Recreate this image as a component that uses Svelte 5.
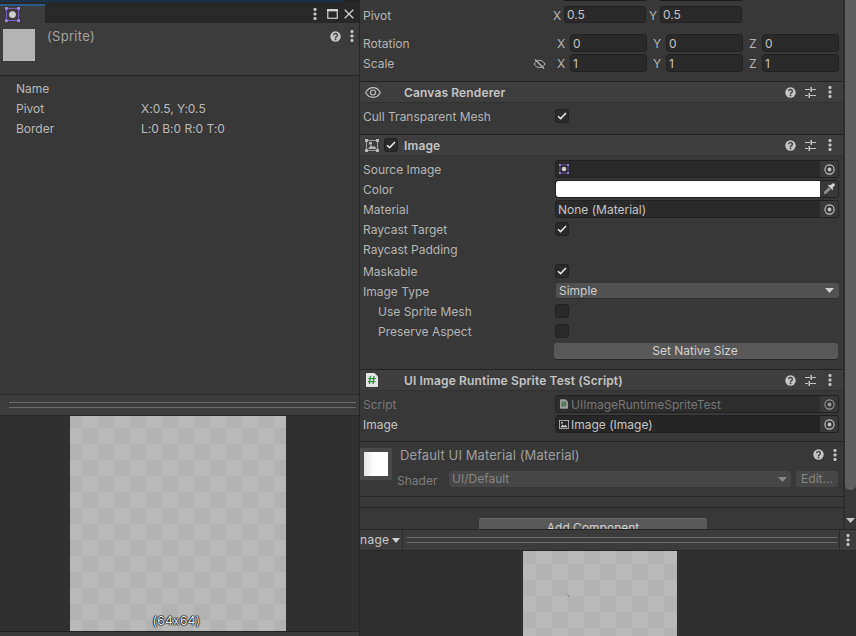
<script>
  const imageRowsA = ['Raycast Target'];
</script>

{#snippet dots()}
  <svg class="ic" width="4" height="14" viewBox="0 0 4 14"><rect x="0.5" y="1" width="3" height="3" rx="1" fill="#c4c4c4"/><rect x="0.5" y="5.500" width="3" height="3" rx="1" fill="#c4c4c4"/><rect x="0.5" y="10" width="3" height="3" rx="1" fill="#c4c4c4"/></svg>
{/snippet}
{#snippet help()}
  <svg class="ic" width="11" height="11" viewBox="0 0 11 11"><circle cx="5.500" cy="5.500" r="5.200" fill="#c4c4c4"/><path d="M3.700 4.200a1.800 1.700 0 1 1 2.800 1.400c-.7.400-1 .7-1 1.300" fill="none" stroke="#3a3a3a" stroke-width="1.400"/><rect x="4.700" y="7.600" width="1.600" height="1.600" fill="#3a3a3a"/></svg>
{/snippet}
{#snippet sliders()}
  <svg class="ic" width="11" height="11" viewBox="0 0 11 11" fill="#c4c4c4"><rect x="0" y="2" width="5" height="1"/><rect x="7" y="2" width="4" height="1"/><rect x="5.500" y="0" width="1.500" height="5"/><rect x="0" y="8" width="3" height="1"/><rect x="5" y="8" width="6" height="1"/><rect x="3.500" y="6" width="1.500" height="5"/></svg>
{/snippet}
{#snippet tools()}
  <span class="tools">{@render help()}{@render sliders()}{@render dots()}</span>
{/snippet}
{#snippet check()}
  <span class="cb"><svg width="10" height="8" viewBox="0 0 10 8"><path d="M1 4.200 3.600 6.600 9 1" fill="none" stroke="#e8e8e8" stroke-width="1.500"/></svg></span>
{/snippet}
{#snippet picker(op)}
  <span class="picker"><svg width="11" height="11" viewBox="0 0 11 11" opacity={op}><circle cx="5.500" cy="5.500" r="4.600" fill="none" stroke="#c4c4c4" stroke-width="1.100"/><circle cx="5.500" cy="5.500" r="1.900" fill="#c4c4c4"/></svg></span>
{/snippet}
{#snippet spriteIcon(s)}
  <svg width={s} height={s} viewBox="0 0 16 16"><rect x="1.500" y="1.500" width="13" height="13" fill="none" stroke="#7d5fc4" stroke-width="1"/><rect x="0" y="0" width="3" height="3" rx=".6" fill="#a585e6"/><rect x="13" y="0" width="3" height="3" rx=".6" fill="#a585e6"/><rect x="0" y="13" width="3" height="3" rx=".6" fill="#a585e6"/><rect x="13" y="13" width="3" height="3" rx=".6" fill="#a585e6"/><circle cx="8" cy="8" r="3.600" fill="#d0d0d0"/></svg>
{/snippet}
{#snippet imgIcon(w, h, c)}
  <svg width={w} height={h} viewBox="0 0 14 12"><rect x=".5" y=".5" width="13" height="11" fill="none" stroke={c} stroke-width="1"/><path d="M2 10 5 6l2 2 2-1.500 3 3.500z" fill={c}/><rect x="3" y="2.500" width="2.500" height="2" fill={c}/></svg>
{/snippet}
{#snippet uiImageIcon()}
  <svg width="14" height="13" viewBox="0 0 14 13" fill="#b4b4b4"><rect x="1.500" y="1.500" width="11" height="10" fill="none" stroke="#9a9a9a" stroke-width="1"/><rect x="0" y="0" width="3" height="3"/><rect x="11" y="0" width="3" height="3"/><rect x="0" y="10" width="3" height="3"/><rect x="11" y="10" width="3" height="3"/><path d="M3 10 6 6l2 2 1.500-1 2 3z"/><rect x="4" y="3" width="3" height="2.500"/></svg>
{/snippet}
{#snippet scriptIcon(w, h, op)}
  <svg width={w} height={h} viewBox="0 0 12 14" opacity={op}><path d="M0 1a1 1 0 0 1 1-1h7.500L12 3.500V13a1 1 0 0 1-1 1H1a1 1 0 0 1-1-1z" fill="#e4e4e4"/><path d="M4.400 3 3.500 11M8 3l-.9 8M2.300 5.600h7.400M2 8.600h7.400" stroke="#2b8a3e" stroke-width="1.200" fill="none"/></svg>
{/snippet}

<div class="app">
  <section class="left">
    <div class="navy"></div>
    <div class="tabs">
      <div class="tab">{@render spriteIcon(15)}</div>
      <div class="tabtools">
        {@render dots()}
        <svg class="ic mx" width="11" height="10" viewBox="0 0 11 10"><rect x=".75" y="1.250" width="9.500" height="8" fill="none" stroke="#d0d0d0" stroke-width="1.200"/><rect x="0" y="0" width="11" height="2.400" fill="#d0d0d0"/></svg>
        <svg class="ic" width="10" height="10" viewBox="0 0 10 10"><path d="M.7.7l8.600 8.600M9.300.7.7 9.300" stroke="#d0d0d0" stroke-width="1.300"/></svg>
      </div>
    </div>
    <header class="lhead">
      <div class="thumb"></div>
      <div class="spname">(Sprite)</div>
      <div class="lheadtools">{@render help()}{@render dots()}</div>
    </header>
    <div class="lbody">
      <div class="lrow"><span class="lk">Name</span></div>
      <div class="lrow"><span class="lk">Pivot</span><span>X:0.5, Y:0.5</span></div>
      <div class="lrow"><span class="lk">Border</span><span>L:0 B:0 R:0 T:0</span></div>
    </div>
    <div class="bar"><div class="grip"></div></div>
    <div class="preview lp">
      <div class="checker big"><span class="dim">(64x64)</span></div>
    </div>
    <div class="lfoot"></div>
  </section>

  <section class="right">
    <div class="rmain">
      <div class="inspector">
        <div class="stub"><i></i><i></i></div>
        <div class="row pivot">
          <span class="k k190">Pivot</span>
          <div class="axis"><span>X</span><div class="f">0.5</div></div>
          <div class="axis"><span>Y</span><div class="f">0.5</div></div>
        </div>
        <div class="row rot">
          <span class="k">Rotation</span>
          <div class="axis"><span>X</span><div class="f">0</div></div>
          <div class="axis"><span>Y</span><div class="f">0</div></div>
          <div class="axis"><span>Z</span><div class="f">0</div></div>
        </div>
        <div class="row">
          <span class="k scale">Scale
            <svg width="13" height="10" viewBox="0 0 13 10"><path d="M1 5c1.500-2.500 3.500-3.500 5.500-3.500S10.500 2.500 12 5c-1.500 2.500-3.500 3.500-5.500 3.500S2.500 7.500 1 5z" fill="none" stroke="#b8b8b8"/><path d="M2 0.500 11 9.500" stroke="#b8b8b8" stroke-width="1.200"/></svg>
          </span>
          <div class="axis"><span>X</span><div class="f">1</div></div>
          <div class="axis"><span>Y</span><div class="f">1</div></div>
          <div class="axis"><span>Z</span><div class="f">1</div></div>
        </div>

        <div class="chead first">
          <span class="cico"><svg width="16" height="11" viewBox="0 0 16 11"><path d="M.7 5.500C2.500 2 5 .6 8 .6s5.500 1.400 7.300 4.900C13.500 9 11 10.400 8 10.400S2.500 9 .7 5.500z" fill="none" stroke="#c4c4c4" stroke-width="1.100"/><circle cx="8" cy="5.500" r="2.500" fill="none" stroke="#c4c4c4" stroke-width="1.100"/></svg></span>
          <span class="ctitle">Canvas Renderer</span>
          {@render tools()}
        </div>
        <div class="row cull"><span class="k">Cull Transparent Mesh</span>{@render check()}</div>

        <div class="chead second">
          <span class="cico">{@render uiImageIcon()}</span>
          <span class="cen">{@render check()}</span>
          <span class="ctitle">Image</span>
          {@render tools()}
        </div>
        <div class="row src"><span class="k">Source Image</span><div class="obj"><span class="objt"><span class="oi">{@render spriteIcon(10)}</span></span>{@render picker(1)}</div></div>
        <div class="row"><span class="k">Color</span><div class="color"><div class="white"></div><span class="drop"><svg width="12" height="12" viewBox="0 0 12 12"><path d="M.8 11.200l.6-2.600L5.800 4.200l2 2-4.400 4.400z" fill="#8f8f8f"/><path d="M5 2.600l1-1 1 1L9 .7a1.300 1.300 0 0 1 2.300 2.300L9.400 5l1 1-1 1z" fill="#d4d4d4"/></svg></span></div></div>
        <div class="row"><span class="k">Material</span><div class="obj"><span class="objt plain">None (Material)</span>{@render picker(1)}</div></div>
        {#each imageRowsA as r}
          <div class="row"><span class="k">{r}</span>{@render check()}</div>
        {/each}
        <div class="row"><span class="k">Raycast Padding</span></div>
        <div class="row mask"><span class="k">Maskable</span>{@render check()}</div>
        <div class="row"><span class="k">Image Type</span><div class="dd">Simple<svg width="9" height="5" viewBox="0 0 9 5"><path d="M0 0h9L4.500 5z" fill="#d0d0d0"/></svg></div></div>
        <div class="row"><span class="k ind">Use Sprite Mesh</span><span class="cb"></span></div>
        <div class="row"><span class="k ind">Preserve Aspect</span><span class="cb"></span></div>
        <div class="native"><button>Set Native Size</button></div>

        <div class="chead third">
          <span class="cico scr">{@render scriptIcon(12, 14, 1)}</span>
          <span class="ctitle">UI Image Runtime Sprite Test (Script)</span>
          {@render tools()}
        </div>
        <div class="row src off"><span class="k">Script</span><div class="obj"><span class="objt"><span class="oi">{@render scriptIcon(8, 10, 1)}</span>UIImageRuntimeSpriteTest</span>{@render picker(.7)}</div></div>
        <div class="row"><span class="k img">Image</span><div class="obj dark"><span class="objt"><span class="oi">{@render imgIcon(10, 9, '#cfcfcf')}</span>Image (Image)</span>{@render picker(1)}</div></div>

        <div class="mat">
          <div class="mthumb"><div class="mwhite"></div></div>
          <div class="mright">
            <div class="mtitle"><span>Default UI Material (Material)</span><span class="mtools">{@render help()}{@render dots()}</span></div>
            <div class="mshader"><span class="shk">Shader</span><div class="shd">UI/Default<svg width="9" height="5" viewBox="0 0 9 5"><path d="M0 0h9L4.500 5z" fill="#888"/></svg></div><div class="edit">Edit...</div></div>
          </div>
        </div>
        <div class="gapline"></div>
        <div class="addwrap"><button class="add">Add Component</button></div>
      </div>
      <div class="scroll">
        <div class="thumbbar"></div>
        <svg class="arrow" width="9" height="5" viewBox="0 0 9 5"><path d="M0 0h9L4.500 5z" fill="#c4c4c4"/></svg>
      </div>
    </div>
    <div class="bar2">
      <div class="sel">nage<svg width="8" height="5" viewBox="0 0 8 5"><path d="M0 0h8L4 5z" fill="#d0d0d0"/></svg></div>
      <div class="grip2"></div>
      <div class="bdots">{@render dots()}</div>
    </div>
    <div class="preview rp">
      <div class="checker small"><i class="speck"></i></div>
    </div>
  </section>
</div>

<style>
  :global(body) { margin: 0; background: #383838; }
  .app {
    display: flex; width: 856px; height: 636px; overflow: hidden;
    font: 12px/20px Inter, "Liberation Sans", sans-serif;
    font-feature-settings: "calt" 0;
    color: #bdbdbd; background: #383838;
  }
  .ic { display: block; flex: none; }
  .left { width: 360px; display: flex; flex-direction: column; flex: none; box-sizing: border-box; border-right: 1px solid #262626; }
  .navy { height: 2px; background: #1c3048; flex: none; margin-right: 16px; box-shadow: 16px 0 0 #222; }
  .tabs { height: 21px; background: #282828; display: flex; flex: none; justify-content: space-between; padding-top: 2px; box-sizing: border-box; }
  .tab { width: 45px; background: #3c3c3c; border-top: 2px solid #2a5a86; box-sizing: border-box; padding: 1px 0 0 5px; }
  .tabtools { display: flex; align-items: center; gap: 6px; padding-right: 5px; }
  .mx { margin-left: 4px; }
  .lhead { height: 53px; background: #3c3c3c; border-bottom: 1px solid #232323; box-sizing: border-box; display: flex; padding: 6px 5px 0 3px; flex: none; }
  .thumb { width: 32px; height: 32px; background: #b4b4b4; }
  .spname { margin-left: 12px; flex: 1; font-size: 13px; line-height: 15px; color: #a3a3a3; letter-spacing: .3px; }
  .lheadtools { display: flex; gap: 9px; height: 14px; align-items: center; }
  .lbody { height: 318px; flex: none; background: #383838; padding-top: 3px; box-sizing: border-box; }
  .lrow { display: flex; height: 20px; padding-left: 16px; color: #b8b8b8; }
  .lk { width: 125px; }
  .bar { height: 22px; flex: none; box-sizing: border-box; background: #3c3c3c; border-top: 1px solid #292929; border-bottom: 1px solid #292929; display: flex; align-items: center; padding: 0 3px 0 9px; }
  .grip { flex: 1; height: 4px; border-top: 1px solid #6a6a6a; border-bottom: 1px solid #6a6a6a; }
  .preview { background: #303030; display: flex; flex: 1; min-height: 0; overflow: hidden; }
  .lp { flex: none; height: 215px; padding-left: 70px; box-sizing: border-box; }
  .rp { padding-left: 163px; }
  .lfoot { flex: 1; background: #3a3a3a; border-top: 1px solid #222; }
  .checker {
    position: relative; height: 100%; flex: none;
    background-color: #b9b9b9;
    background-image: conic-gradient(transparent 25%, #b2b2b2 0 50%, transparent 0 75%, #b2b2b2 0);
    background-size: 32px 32px;
  }
  .big { width: 216px; background-position: -4px -4px; }
  .small { width: 154px; background-position: -3px -3px; }
  .dim { position: absolute; left: 0; right: 0; bottom: 1px; text-align: center; color: #eeeeee; line-height: 18px; letter-spacing: .3px; padding-right: 3px; box-sizing: border-box; text-shadow: 0 0 2px #000, 0 0 1px #000, 0 0 1px #000, 0 0 1px #000; }
  .speck { position: absolute; left: 44px; top: 44px; width: 3px; height: 1px; background: #888; transform: rotate(45deg); }

  .right { flex: 1; min-width: 0; display: flex; flex-direction: column; }
  .rmain { height: 529px; flex: none; display: flex; overflow: hidden; }
  .inspector { width: 483px; flex: none; background: #383838; overflow: hidden; }
  .scroll { flex: 1; position: relative; background: #383838; border-left: 2px solid #2e2e2e; box-sizing: border-box; }
  .thumbbar { height: 490px; background: #5f5f5f; border-radius: 0 0 5px 5px; }
  .arrow { position: absolute; left: 1px; top: 518px; }
  .stub { height: 1px; display: flex; margin: 0 0 5px 204px; gap: 14px; }
  .stub i { width: 82px; background: #1e1e1e; }
  .row { display: flex; height: 20px; padding-left: 3px; flex: none; }
  .k { width: 192px; flex: none; color: #b4b4b4; }
  .k.img { color: #c4c4c4; }
  .k190 { width: 190px; }
  .ind { padding-left: 15px; box-sizing: border-box; }
  .scale { display: flex; align-items: center; justify-content: space-between; padding-right: 9px; box-sizing: border-box; height: 20px; }
  .axis { width: 96px; display: flex; padding-right: 4px; box-sizing: border-box; line-height: 20px; }
  .axis span { width: 15px; padding-left: 2px; box-sizing: border-box; flex: none; color: #b4b4b4; }
  .pivot .axis { padding-right: 3px; }
  .pivot .axis span { width: 11px; padding-left: 0; }
  .f { flex: 1; height: 18px; line-height: 18px; background: #2a2a2a; border: 1px solid #212121; border-radius: 3px; box-sizing: border-box; padding-left: 2px; color: #c4c4c4; }
  .rot { margin-top: 8px; }
  .pivot .f { height: 17px; line-height: 16px; }

  .chead { display: flex; align-items: center; height: 22px; box-sizing: border-box; background: #3e3e3e; border-top: 1px solid #232323; border-bottom: 1px solid #333; padding-left: 5px; flex: none; }
  .first { margin-top: 7px; }
  .second { margin-top: 7px; }
  .third { margin-top: 10px; }
  .cico { width: 39px; flex: none; display: flex; align-items: center; }
  .second .cico { width: 19px; }
  .scr { padding-left: 1px; box-sizing: border-box; }
  .cen { width: 20px; flex: none; }
  .ctitle { flex: 1; font-weight: 600; color: #c4c4c4; letter-spacing: .14px; line-height: 18px; padding-top: 2px; }
  .tools { display: flex; align-items: center; gap: 9px; padding-right: 11px; }
  .tools :global(svg:last-child) { margin-left: 3px; }
  .cull { margin-top: 4px; }
  .cb { display: block; width: 14px; height: 14px; margin-top: 2px; background: #2a2a2a; border: 1px solid #212121; border-radius: 3px; box-sizing: border-box; position: relative; flex: none; }
  .cb svg { position: absolute; left: 1px; top: 2px; }
  .cen .cb { margin-top: 0; }
  .src { margin-top: 4px; }
  .mask { margin-top: 2px; }
  .obj { width: 284px; height: 18px; background: #2a2a2a; border: 1px solid #212121; border-radius: 3px; box-sizing: border-box; display: flex; overflow: hidden; }
  .objt { flex: 1; line-height: 17px; padding-left: 1px; display: flex; align-items: center; color: #c4c4c4; }
  .plain { padding-left: 2px; }
  .oi { width: 14px; display: flex; align-items: center; justify-content: center; flex: none; }
  .picker { width: 18px; background: #383838; display: flex; align-items: center; justify-content: center; flex: none; }
  .off .k, .off .objt { color: #767676; }
  .off .obj { background: #2d2d2d; }
  .off .oi { opacity: .6; }
  .dark { background: #262626; }
  .color { width: 284px; height: 18px; display: flex; background: #2a2a2a; border: 1px solid #212121; border-radius: 3px; box-sizing: border-box; overflow: hidden; }
  .white { flex: 1; background: #fff; border-radius: 2px 0 0 2px; }
  .drop { width: 18px; display: flex; align-items: center; justify-content: center; background: #383838; }
  .dd { width: 283px; margin: 1px 0 0 1px; height: 16px; background: #515151; border-radius: 3px; border-bottom: 1px solid #2e2e2e; display: flex; align-items: center; justify-content: space-between; padding: 0 5px 0 3px; box-sizing: border-box; color: #cdcdcd; line-height: 16px; }
  .native { height: 16px; margin-top: 1px; padding-left: 194px; }
  button { font: inherit; border: 0; padding: 0; cursor: default; font-feature-settings: inherit; }
  .native button { display: block; width: 284px; height: 16px; background: #585858; color: #d0d0d0; border-radius: 3px; line-height: 16px; box-shadow: 0 1px 0 #2a2a2a; padding-right: 2px; }
  .mat { margin-top: 6px; height: 56px; box-sizing: border-box; border-top: 1px solid #232323; border-bottom: 1px solid #232323; display: flex; background: #383838; }
  .mthumb { width: 32px; height: 32px; margin-top: 6px; background: #4a4a4a; padding: 4px; box-sizing: border-box; flex: none; }
  .mwhite { width: 24px; height: 24px; background: linear-gradient(90deg, #e4e4e4, #fff 40%); }
  .mright { flex: 1; padding-left: 5px; }
  .mtitle { display: flex; justify-content: space-between; align-items: center; height: 24px; padding: 1px 0 0 3px; box-sizing: border-box; font-size: 13px; color: #9d9d9d; letter-spacing: .1px; }
  .mtools { display: flex; align-items: center; gap: 9px; padding-right: 6px; }
  .mshader { display: flex; margin-top: 5px; height: 16px; }
  .shk { width: 52px; color: #7e7e7e; line-height: 20px; flex: none; }
  .shd { width: 342px; height: 16px; background: #474747; border-radius: 3px; display: flex; justify-content: space-between; align-items: center; padding: 0 4px 0 3px; box-sizing: border-box; color: #858585; line-height: 16px; }
  .edit { margin-left: 5px; width: 42px; height: 16px; background: #474747; border-radius: 3px; color: #858585; text-align: center; line-height: 16px; }
  .gapline { height: 11px; box-sizing: border-box; border-bottom: 1px solid #232323; }
  .addwrap { padding: 10px 0 0 119px; }
  .add { display: block; width: 228px; height: 22px; background: #585858; border-top: 1px solid #6a6a6a; border-radius: 3px 3px 0 0; color: #d0d0d0; line-height: 18px; padding-bottom: 3px; }

  .bar2 { height: 22px; flex: none; box-sizing: border-box; background: #3c3c3c; border-top: 1px solid #262626; border-bottom: 1px solid #262626; display: flex; align-items: center; }
  .sel { width: 43px; height: 100%; box-sizing: border-box; border-right: 1px solid #2a2a2a; display: flex; align-items: center; gap: 3px; color: #c8c8c8; letter-spacing: .3px; flex: none; overflow: hidden; }
  .grip2 { width: 430px; margin-left: 4px; height: 4px; border-top: 1px solid #6a6a6a; border-bottom: 1px solid #6a6a6a; flex: none; }
  .bdots { margin-left: 2px; width: 17px; height: 100%; border-left: 1px solid #2a2a2a; display: flex; align-items: center; justify-content: center; box-sizing: border-box; }
</style>
